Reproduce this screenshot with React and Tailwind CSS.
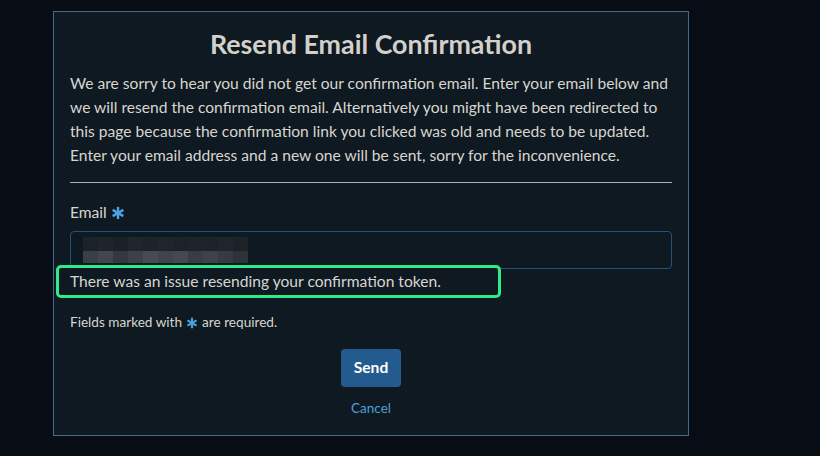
const blocksTop = ["#1b2228", "#1d242a", "#1a2127", "#1f262c", "#1c2329", "#1e252b", "#1b2228", "#1d242a", "#1c2329", "#1e252b", "#1b2228"];
const blocksBottom = ["#3a3f45", "#42474d", "#33383e", "#3c4147", "#474c52", "#3f444a", "#44494f", "#383d43", "#3e4349", "#363b41", "#2e3339"];

const Asterisk = ({ size = 14 }) => (
  <svg width={size} height={size} viewBox="0 0 16 16" className="inline-block">
    <g stroke="#4aa3e0" strokeWidth="2.8" strokeLinecap="butt">
      <line x1="8" y1="1" x2="8" y2="15" />
      <line x1="1.9" y1="4.5" x2="14.1" y2="11.5" />
      <line x1="1.9" y1="11.5" x2="14.1" y2="4.5" />
    </g>
  </svg>
);

export default function App() {
  return (
    <div
      className="w-[820px] h-[456px] bg-[#080d15] pt-[11px] pl-[53px] overflow-hidden"
      style={{ fontFamily: "Lato, 'Liberation Sans', sans-serif" }}
    >
      <div className="w-[636px] h-[425px] border border-[#46698c] bg-[#0e1921] px-4 pt-[16px]">
        {/* Heading */}
        <h1 className="text-center text-[26.8px] font-bold text-[#d3d0cb] leading-8">
          Resend Email Confirmation
        </h1>
        <p className="mt-[11px] text-[15.6px] leading-[24px] text-[#d8d5d0]">
          We are sorry to hear you did not get our confirmation email. Enter your email below and
          we will resend the confirmation email. Alternatively you might have been redirected to
          this page because the confirmation link you clicked was old and needs to be updated.
          Enter your email address and a new one will be sent, sorry for the inconvenience.
        </p>
        <div className="mt-[15px] h-px bg-[#9bb3c7]" />

        {/* Email */}
        <div className="mt-[18px] flex items-center gap-1 text-[15.6px] text-[#d8d5d0]">
          Email <Asterisk size={14} />
        </div>
        <div className="relative mt-[7px] h-[38px] rounded border border-[#26507a] bg-[#0e1921] flex flex-col justify-center pl-[12px]">
          <div className="flex">
            {blocksTop.map((c, i) => (
              <div key={i} className="w-[15px] h-[14px]" style={{ background: c }} />
            ))}
          </div>
          <div className="flex">
            {blocksBottom.map((c, i) => (
              <div key={i} className="w-[15px] h-[12px]" style={{ background: c }} />
            ))}
          </div>
        </div>
        <div className="relative -mt-[4px] -ml-[14px] w-[445px] h-[33px] rounded-[5px] border-[3px] border-[#2eec8a] bg-[#0e1921] pl-[11px] flex items-center text-[15.6px] text-[#d8d5d0]">
          There was an issue resending your confirmation token.
        </div>

        <div className="mt-[14px] flex items-center gap-1 text-[13.6px] text-[#d8d5d0]">
          Fields marked with <Asterisk size={12} /> are required.
        </div>

        <div className="mt-[16px] flex flex-col items-center">
          <button className="w-[60px] h-[38px] rounded bg-[#245b8e] text-white text-[15.6px] font-bold">
            Send
          </button>
          <span className="mt-[11px] text-[13.5px] text-[#4c9fdc]">Cancel</span>
        </div>
      </div>
    </div>
  );
}
